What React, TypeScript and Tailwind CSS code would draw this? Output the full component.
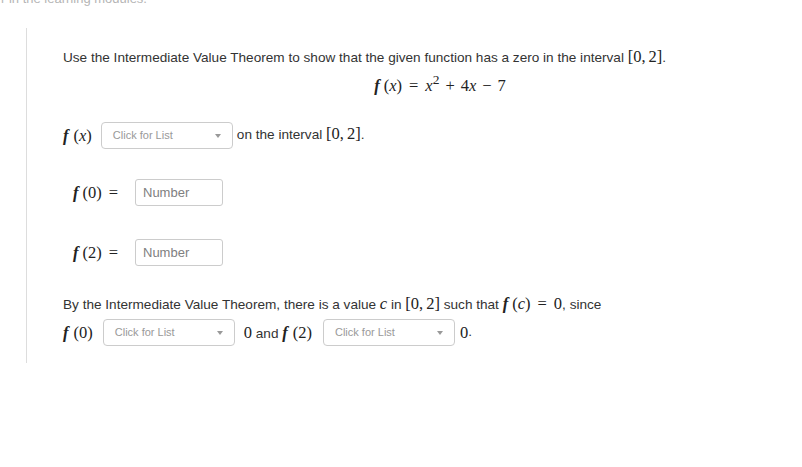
import React from "react";

const MATH = "font-['Liberation_Serif',serif] text-[16.5px] leading-[26px] text-[#222]";
const INLINE = "font-['Liberation_Serif',serif] text-[16.5px] leading-none text-[#222]";

function V({ children }: { children: React.ReactNode }) {
  return <span className="italic">{children}</span>;
}

function F() {
  return <span className="italic font-semibold">f</span>;
}

function Fn({ arg, italicArg = false }: { arg: string; italicArg?: boolean }) {
  return (
    <span className={MATH}>
      <F />
      <span className="ml-[5px]">(</span>
      {italicArg ? <V>{arg}</V> : arg}
      <span>)</span>
    </span>
  );
}

function Interval() {
  return (
    <span className={INLINE}>
      [0,<span className="ml-[3px]">2</span>]
    </span>
  );
}

function Dropdown() {
  return (
    <div className="w-[132px] h-[27px] shrink-0 border border-[#ccc] rounded-[4px] bg-white flex items-center justify-between pl-[11px] pr-[11px] text-[11px] text-[#999]">
      <span>Click for List</span>
      <span className="w-0 h-0 border-x-[3.5px] border-t-[4px] border-x-transparent border-t-[#999]" />
    </div>
  );
}

function NumberInput() {
  return (
    <div className="w-[88px] h-[27px] border border-[#ccc] rounded-[3px] bg-white flex items-center pl-[7px] text-[13px] text-[#808080]">
      Number
    </div>
  );
}

export default function App() {
  return (
    <div className="w-full h-[467px] bg-white overflow-hidden font-['Liberation_Sans',Arial,sans-serif] text-[13.6px] text-[#333]">
      {/* clipped line from the previous block */}
      <div className="-mt-[7px] h-[12px] pl-[1px] text-[13px] leading-[12px] text-[#b5b5b5]">
        r in the learning modules.
      </div>

      <div className="ml-[26px] mt-[23px] border-l border-[#ddd] pl-[36px] pt-[20px] pb-[17px]">
        <p className="leading-[20px] whitespace-nowrap">
          Use the Intermediate Value Theorem to show that the given function has a zero in the interval <Interval />.
        </p>

        <div className={`w-[754px] mt-[5px] flex justify-center ${MATH}`}>
          <span>
            <F />
            <span className="ml-[4px]">(</span>
            <V>x</V>)<span className="mx-[7px]">=</span>
            <V>x</V>
            <sup className="text-[13.5px] relative -top-[7px]">2</sup>
            <span className="mx-[6px]">+</span>4<V>x</V>
            <span className="mx-[6px]">−</span>7
          </span>
        </div>

        <div className="mt-[23px] flex items-center">
          <Fn arg="x" italicArg />
          <div className="ml-[9px]">
            <Dropdown />
          </div>
          <span className="ml-[4px] whitespace-nowrap">
            on the interval <Interval />.
          </span>
        </div>

        <div className="ml-[10px] mt-[30px] flex items-center">
          <span className={`w-[62px] ${MATH}`}>
            <F />
            <span className="ml-[4px]">(</span>0)<span className="ml-[7px]">=</span>
          </span>
          <NumberInput />
        </div>

        <div className="ml-[10px] mt-[33px] flex items-center">
          <span className={`w-[62px] ${MATH}`}>
            <F />
            <span className="ml-[4px]">(</span>2)<span className="ml-[7px]">=</span>
          </span>
          <NumberInput />
        </div>

        <p className="mt-[29px] leading-[20px] whitespace-nowrap">
          By the Intermediate Value Theorem, there is a value <span className={INLINE}><V>c</V></span> in <Interval /> such that{" "}
          <span className={INLINE}>
            <F />
            <span className="ml-[4px]">(</span>
            <V>c</V>)<span className="mx-[7px]">=</span>0
          </span>
          , since
        </p>

        <div className="mt-[4px] flex items-center whitespace-nowrap">
          <Fn arg="0" />
          <div className="ml-[10px]">
            <Dropdown />
          </div>
          <span className="ml-[9px]">
            <span className={MATH}>0</span> and <Fn arg="2" />
          </span>
          <div className="ml-[11px]">
            <Dropdown />
          </div>
          <span className={`ml-[5px] ${MATH}`}>0</span>
          <span>.</span>
        </div>
      </div>
    </div>
  );
}
